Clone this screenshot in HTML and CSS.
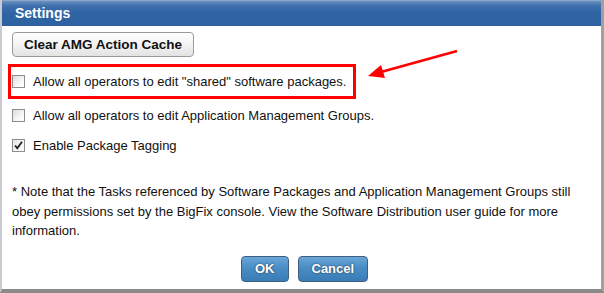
FILE: index.html
```
<!DOCTYPE html>
<html>
<head>
<meta charset="utf-8">
<link rel="stylesheet" href="styles.css">
</head>
<body>
<div class="dialog">
  <div class="titlebar">Settings</div>
  <div class="content">
    <button class="btn-plain">Clear AMG Action Cache</button>
    <div class="options">
      <label class="opt highlight"><span class="cb"></span>Allow all operators to edit "shared" software packages.</label>
      <label class="opt"><span class="cb"></span>Allow all operators to edit Application Management Groups.</label>
      <label class="opt"><span class="cb checked"><svg width="11" height="11" viewBox="0 0 11 11"><path d="M2 5.5 L4.3 8.2 L9 1.8" fill="none" stroke="#222" stroke-width="1.8"/></svg></span>Enable Package Tagging</label>
    </div>
    <p class="note">* Note that the Tasks referenced by Software Packages and Application Management Groups still obey permissions set by the BigFix console. View the Software Distribution user guide for more information.</p>
    <div class="actions">
      <button class="btn-blue">OK</button>
      <button class="btn-blue">Cancel</button>
    </div>
  </div>
  <svg class="arrow" width="100" height="40" viewBox="0 0 100 40">
    <path d="M90 3 L14 24" stroke="#f00" stroke-width="2.5" fill="none"/>
    <path d="M1 28 L14 17 L18 30 Z" fill="#f00"/>
  </svg>
</div>
</body>
</html>
```
FILE: styles.css
```
html, body {
  margin: 0;
  padding: 0;
  background: #fff;
}
.dialog {
  position: relative;
  width: 604px;
  height: 293px;
  box-sizing: border-box;
  border-left: 2px solid #c8ccd2;
  border-right: 3px solid #a0a0a0;
  border-bottom: 4px solid #8a8a8a;
  font-family: "Liberation Sans", Arial, sans-serif;
  font-size: 13px;
  color: #111;
  display: flex;
  flex-direction: column;
}
.titlebar {
  height: 26px;
  box-sizing: border-box;
  background: linear-gradient(#6a90c0 0px, #3d6fac 5px, #2f64a3 12px, #2e62a1 100%);
  border-top: 1px solid #8aa6c8;
  color: #fff;
  font-weight: bold;
  font-size: 14px;
  padding-left: 13px;
  line-height: 24px;
}
.content {
  flex: 1;
  display: flex;
  flex-direction: column;
  padding: 6px 0 0 10px;
}
.btn-plain {
  align-self: flex-start;
  width: 182px;
  height: 25px;
  border: 1px solid #9a9a9a;
  border-radius: 4px;
  background: linear-gradient(#ffffff, #f3f3f3 50%, #e2e2e2);
  font-family: "Liberation Sans", Arial, sans-serif;
  font-weight: bold;
  font-size: 13.5px;
  color: #111;
  padding: 0;
}
.options {
  display: flex;
  flex-direction: column;
  margin-top: 7px;
}
.opt {
  display: flex;
  align-items: center;
  height: 30px;
}
.opt.highlight {
  width: 341px;
  height: 29px;
  margin-left: -4px;
  border: 3px solid #ff0000;
  padding-left: 1px;
}
.opt.highlight + .opt {
  margin-top: 1px;
}
.cb {
  width: 11px;
  height: 11px;
  border: 1px solid #8d8d8d;
  background: linear-gradient(135deg, #dcdcdc, #f6f6f6 60%, #ffffff);
  margin-right: 8px;
  flex: none;
  display: flex;
  align-items: center;
  justify-content: center;
}
.cb.checked {
  background: linear-gradient(135deg, #e6e6e6, #ffffff);
}
.note {
  margin: 22px 0 0 0;
  padding-right: 20px;
  line-height: 19.5px;
  font-size: 13px;
}
.actions {
  display: flex;
  gap: 9px;
  margin-top: 15px;
  padding-left: 229px;
}
.btn-blue {
  height: 26px;
  border: 1px solid #3e5f80;
  border-radius: 4px;
  background: linear-gradient(#6aa6d8, #4a8cc4 45%, #3a7cb6);
  color: #fff;
  font-family: "Liberation Sans", Arial, sans-serif;
  font-weight: bold;
  font-size: 13px;
  text-shadow: 0 0 2px #234;
  padding: 0 13px;
}
.arrow {
  position: absolute;
  left: 365px;
  top: 48px;
}
```
